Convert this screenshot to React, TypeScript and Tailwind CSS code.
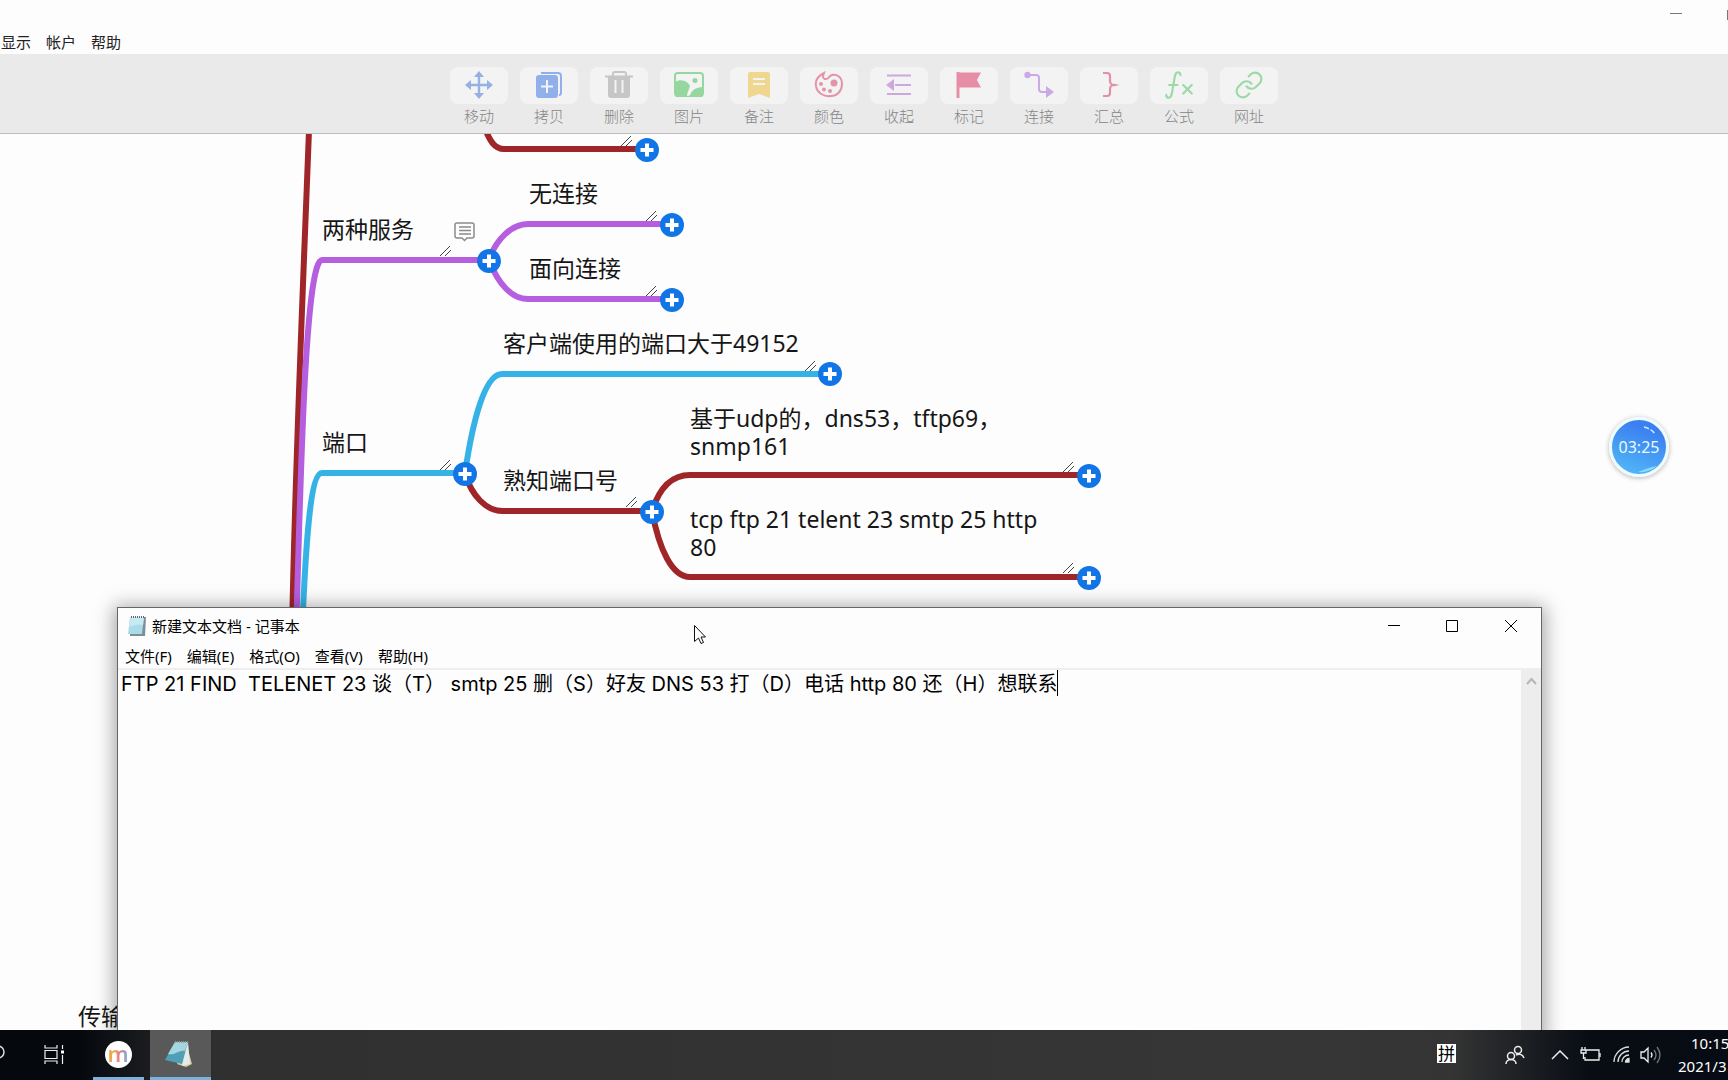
import type { ReactNode } from "react";
import { Link } from "lucide-react";
import { TbMathFunction } from "react-icons/tb";

const Icon = ({ children, color }: { children: ReactNode; color: string }) => (
  <svg width="30" height="30" viewBox="0 0 30 30" fill="none" stroke={color} strokeWidth="2">
    {children}
  </svg>
);

const tools: { label: string; icon: ReactNode }[] = [
  {
    label: "移动",
    icon: (
      <Icon color="#95b0e3">
        <path d="M15 4v22M4 15h22" strokeWidth="2.400" />
        <path d="M15 1l5 6H10zM15 29l5-6H10zM1 15l6-5v10zM29 15l-6-5v10z" fill="#95b0e3" stroke="none" />
      </Icon>
    ),
  },
  {
    label: "拷贝",
    icon: (
      <Icon color="#8fb0ea">
        <path d="M7 3h17a3 3 0 0 1 3 3v17a2 2 0 0 1-2 2" />
        <rect x="2" y="5" width="22" height="23" rx="3" fill="#8fb0ea" stroke="none" />
        <path d="M13 10v13M7 16.500h12" stroke="#f3f3f3" />
      </Icon>
    ),
  },
  {
    label: "删除",
    icon: (
      <Icon color="#c6c6c6">
        <path d="M1 6.500h28M9 6V4a2 2 0 0 1 2-2h9a2 2 0 0 1 2 2v2" />
        <path d="M4 7h22v18a3 3 0 0 1-3 3H7a3 3 0 0 1-3-3z" fill="#c6c6c6" stroke="none" />
        <path d="M11.500 10v13M18.500 10v13" stroke="#f3f3f3" />
      </Icon>
    ),
  },
  {
    label: "图片",
    icon: (
      <Icon color="#95d79f">
        <rect x="1" y="3" width="28" height="23" rx="3" />
        <path d="M1 12c7-4 13 0 15 4-1 3-3 7-3 11H3a2 2 0 0 1-2-2zM16 27c0-6 6-10 13-10v8a2 2 0 0 1-2 2z" fill="#95d79f" stroke="none" />
        <circle cx="21" cy="10.500" r="2.500" fill="#95d79f" stroke="none" />
        <path d="M14 26c1-5 5-9 9-10" stroke="#f3f3f3" />
      </Icon>
    ),
  },
  {
    label: "备注",
    icon: (
      <Icon color="#efd78f">
        <path d="M4 4a2 2 0 0 1 2-2h18a2 2 0 0 1 2 2v24l-11-4-11 4z" fill="#efd78f" stroke="none" />
        <path d="M9 9h12M9 14h12" stroke="#f3f3f3" />
      </Icon>
    ),
  },
  {
    label: "颜色",
    icon: (
      <Icon color="#e394aa">
        <path d="M10 3c-6 3-9 8-8 13 1 7 8 11 15 10 7 0 11-6 11-12 0-7-5-10-10-9-4 1-3 5-7 4-3-1-2-3-1-6z" />
        <circle cx="20" cy="13" r="2.500" fill="#e394aa" />
        <g fill="#e394aa" stroke="none">
          <circle cx="7" cy="14" r="2" />
          <circle cx="10" cy="19.500" r="2" />
          <circle cx="16" cy="21" r="2" />
        </g>
      </Icon>
    ),
  },
  {
    label: "收起",
    icon: (
      <Icon color="#cca8df">
        <path d="M3 5.500h24M11 15h16M3 24h24" />
        <path d="M2 15l8-6v12z" fill="#cca8df" stroke="none" />
      </Icon>
    ),
  },
  {
    label: "标记",
    icon: (
      <Icon color="#e68ea6">
        <path d="M4 2v26" strokeWidth="3" />
        <path d="M4 2.500h23l-4 7.500 4 7.500H4z" fill="#e68ea6" stroke="none" />
      </Icon>
    ),
  },
  {
    label: "连接",
    icon: (
      <Icon color="#cba9e6">
        <path d="M4 5h8a3 3 0 0 1 3 3v11a3 3 0 0 0 3 3h6" />
        <circle cx="3.500" cy="5" r="3.200" fill="#cba9e6" stroke="none" />
        <path d="M22 16l8 6-8 6z" fill="#cba9e6" stroke="none" />
      </Icon>
    ),
  },
  {
    label: "汇总",
    icon: (
      <Icon color="#e38fa6">
        <path d="M9 3h4a3 3 0 0 1 3 3v5a4 4 0 0 0 5 4 4 4 0 0 0-5 4v4a3 3 0 0 1-3 3H9" strokeWidth="2.200" />
      </Icon>
    ),
  },
  { label: "公式", icon: <TbMathFunction size={34} color="#9bd9a5" strokeWidth={1.500} /> },
  { label: "网址", icon: <Link size={30} color="#9bd9a5" strokeWidth={1.700} /> },
];

// Label positions are the left top corner of the text, in canvas coordinates
const labels = [
  { text: "无连接", x: 529, y: 45, w: 160 },
  { text: "两种服务", x: 322, y: 81, w: 130 },
  { text: "面向连接", x: 529, y: 120, w: 160 },
  { text: "客户端使用的端口大于49152", x: 503, y: 195, w: 320 },
  { text: "端口", x: 322, y: 294, w: 130 },
  { text: "基于udp的，dns53，tftp69，snmp161", x: 690, y: 270, w: 370 },
  { text: "熟知端口号", x: 503, y: 332, w: 130 },
  { text: "tcp ftp 21 telent 23 smtp 25 http 80", x: 690, y: 371, w: 370 },
  { text: "传输", x: 78, y: 868, w: 60 },
];

const pluses = [
  [647, 16], [672, 91], [489, 127], [672, 166], [830, 240],
  [465, 340], [652, 378], [1089, 342], [1089, 444],
];

const marks = [
  [621, 2], [646, 77], [440, 112], [646, 152], [805, 227],
  [440, 326], [626, 363], [1063, 328], [1063, 429],
];

const branches = [
  { color: "#9f2529", d: "M309 -4C304 130 295 330 292 500" },
  { color: "#b55fe0", d: "M296 500C300 380 304 126 322 126H489C496 105 512 90 528 90H672M489 126C498 150 512 165 528 165H672" },
  { color: "#9f2529", d: "M484 -8C490 8 495 15 504 15H647" },
  { color: "#35b3e6", d: "M302 500C306 400 311 339 322 339H465C473 285 485 240 502 240H830" },
  { color: "#9f2529", d: "M465 340C472 362 486 377 503 377H652C659 355 671 341 690 341H1089M652 377C659 415 672 443 690 443H1089" },
];

function MindMap() {
  return (
    <>
      <svg className="absolute left-0 top-0 h-full w-full" fill="none" strokeWidth="6">
        {branches.map((b) => (
          <path key={b.d} d={b.d} stroke={b.color} />
        ))}
        {marks.map(([x, y]) => (
          <path key={`${x}-${y}`} d={`M${x} ${y + 10}l10-10M${x + 5} ${y + 10}l6-6`} stroke="#444" strokeWidth="1" />
        ))}
        <g stroke="#8a8a8a" strokeWidth="1.500">
          <path d="M457 89h15a2 2 0 0 1 2 2v11a2 2 0 0 1-2 2h-5l-2.500 2.500-2.500-2.500h-5a2 2 0 0 1-2-2V91a2 2 0 0 1 2-2z" />
          <path d="M459 93h12M459 96.500h12M459 100h12" />
        </g>
      </svg>
      {labels.map((l) => (
        <p key={l.text} className="absolute text-[23px] leading-7 text-[#161616]" style={{ left: l.x, top: l.y, width: l.w }}>
          {l.text}
        </p>
      ))}
      {pluses.map(([x, y]) => (
        <button
          key={`${x}-${y}`}
          aria-label="+"
          className="absolute flex size-6 -translate-x-1/2 -translate-y-1/2 items-center justify-center rounded-full bg-[#1175e6]"
          style={{ left: x, top: y }}
        >
          <svg width="14" height="14" stroke="#fff" strokeWidth="4">
            <path d="M7 .5v13M.5 7h13" />
          </svg>
        </button>
      ))}
    </>
  );
}

function Notepad() {
  return (
    <section className="absolute -bottom-10 left-[117px] right-[186px] top-[473px] flex flex-col border border-[#666] bg-[#fdfdfd] shadow-[0_2px_18px_3px_rgba(0,0,0,0.35)]">
      <header className="flex h-9 items-center pl-[9px]">
        <svg width="20" height="22" viewBox="0 0 20 22">
          <path d="M4 2h15l-1 19H3z" fill="#7d8f90" />
          <path d="M3 2h14l-2 17H1z" fill="#a9dbe8" />
          <path d="M3 2h14l-1 8C10 8 6 12 2 11z" fill="#c6eaf2" />
          <path d="M4 2h13" stroke="#667" strokeWidth="2" strokeDasharray="1 1" />
        </svg>
        <h1 className="ml-[5px] flex-1 text-[15px] text-black">新建文本文档 - 记事本</h1>
        <button aria-label="最小化" className="flex h-full w-[58px] items-center justify-center">
          <svg width="12" height="12" stroke="#000"><path d="M0 5.500h12" /></svg>
        </button>
        <button aria-label="最大化" className="flex h-full w-[58px] items-center justify-center">
          <svg width="12" height="12" fill="none" stroke="#000"><path d="M.5.500h11v11H.5z" /></svg>
        </button>
        <button aria-label="关闭" className="flex h-full w-[60px] items-center justify-center">
          <svg width="12" height="12" stroke="#000"><path d="M0 0l12 12M12 0L0 12" /></svg>
        </button>
      </header>
      <nav className="flex h-[26px] items-center gap-[15px] border-b-2 border-[#eee] pl-[7px] text-[15px] text-black">
        {["文件(F)", "编辑(E)", "格式(O)", "查看(V)", "帮助(H)"].map((m) => (
          <button key={m}>{m}</button>
        ))}
      </nav>
      <div className="relative flex min-h-0 flex-1">
        <textarea
          aria-label="文本"
          className="flex-1 resize-none overflow-hidden bg-transparent px-[3px] font-[Inter,'Noto_Sans_CJK_SC',sans-serif] text-[20px] leading-7 text-black outline-none"
          defaultValue="FTP 21 FIND  TELENET 23 谈（T） smtp 25 删（S）好友 DNS 53 打（D）电话 http 80 还（H）想联系"
        />
        <span className="absolute left-[939px] top-0 h-[26px] w-px bg-black" />
        <div className="flex w-5 justify-center bg-[#ededed] pt-[7px]">
          <svg width="11" height="9" fill="none" stroke="#b5b5b5" strokeWidth="2"><path d="M1 7l4.500-5L10 7" /></svg>
        </div>
      </div>
    </section>
  );
}

function Taskbar() {
  return (
    <footer className="relative z-10 flex h-[50px] shrink-0 items-center overflow-hidden bg-[linear-gradient(90deg,#05090e_0,#05090e_80px,#303030_220px,#363636_75%,#343434_84%,#080d14_92%,#070c14_100%)] text-white">
      <svg width="44" height="50" fill="none" stroke="#ddd" strokeWidth="1.500"><circle cx="-2" cy="22" r="6" /></svg>
      <button aria-label="任务视图" className="flex w-[49px] justify-start">
        <svg width="20" height="20" fill="none" stroke="#eee" strokeWidth="1.200">
          <path d="M1 0v3h12V0M1 19v-3h12v3M1 5.500h12v8H1zM18.500 0v4M18.500 10v9" />
          <path d="M17 5.500h3v3h-3z" fill="#fff" stroke="none" />
        </svg>
      </button>
      <button className="flex h-full w-[51px] items-center justify-center border-b-[3px] border-[#7db2dc] pr-px pt-[2px]">
        <span className="flex size-[27px] items-center justify-center rounded-full bg-white">
          <span className="bg-[linear-gradient(90deg,#f39a4a,#e9b04b_35%,#e5719c_60%,#68c3dc)] bg-clip-text pb-1 text-[22px] font-semibold leading-6 text-transparent">m</span>
        </span>
      </button>
      <button aria-label="记事本" className="ml-[6px] flex h-full w-[61px] items-center justify-center border-b-[3px] border-[#7db2dc] bg-[#595959] pr-[5px]">
        <svg width="28" height="28" viewBox="0 0 28 28">
          <path d="M22 3l6 21-6 3-9-3z" fill="#d8cf9e" />
          <path d="M11 2h13l-6 22L1 20z" fill="#4f9fb8" />
          <path d="M11 2h13l-3 9C16 9 10 16 4 14z" fill="#a4d6e2" />
          <path d="M18 26l6-24 2 22z" fill="#e3ebeb" />
          <path d="M11 2h13" stroke="#999" strokeWidth="2" strokeDasharray="1 1" />
        </svg>
      </button>
      <div className="flex-1" />
      <button className="mb-[3px] flex size-[19px] items-center justify-center bg-white text-[17px] leading-none text-black">拼</button>
      <button aria-label="人脉" className="ml-[49px]">
        <svg width="20" height="20" fill="none" stroke="#eee" strokeWidth="1.500">
          <circle cx="13" cy="5" r="3.500" />
          <circle cx="6" cy="11" r="3.500" />
          <path d="M1 19c0-6 10-6 10 0M11 10c4-2 7 0 8 3" />
        </svg>
      </button>
      <button aria-label="显示隐藏的图标" className="ml-[26px]">
        <svg width="18" height="10" fill="none" stroke="#eee" strokeWidth="1.500"><path d="M1 9l8-8 8 8" /></svg>
      </button>
      <button aria-label="电池" className="ml-[11px]">
        <svg width="21" height="16" fill="none" stroke="#eee" strokeWidth="1.300">
          <path d="M6 3h13v10H5v-3M2 0v3M5 0v3M1 3h5v3H1zM3.500 6v6" />
          <path d="M20 6v4" />
        </svg>
      </button>
      <button aria-label="网络" className="ml-[12px]">
        <svg width="18" height="18" fill="none" stroke="#ddd" strokeWidth="1.300">
          <path d="M1 16C1 8 8 1 16 1M5 16C5 10 10 5 16 5M9 16c0-4 3-7 7-7" />
          <path d="M12.500 16c0-2 2-3.500 3.500-3.500V16z" fill="#eee" />
        </svg>
      </button>
      <button aria-label="音量" className="ml-[9px]">
        <svg width="22" height="18" fill="none" stroke="#eee" strokeWidth="1.300">
          <path d="M1 6h3l4-4v14l-4-4H1zM11 6.500q2 2.500 0 5" />
          <path d="M14 4q4 5 0 10M17 1q6 8 0 16" stroke="#777" />
        </svg>
      </button>
      <p className="ml-4 w-[50px] whitespace-nowrap text-[15px] leading-[23px]">
        <time className="block pl-[13px]">10:15</time>
        <time className="block">2021/3</time>
      </p>
    </footer>
  );
}

export default function App() {
  return (
    <div className="flex h-screen flex-col overflow-hidden bg-[#fdfdfd] font-['Noto_Sans','Noto_Sans_CJK_SC',sans-serif]">
      <header className="relative flex h-[54px] shrink-0 items-end justify-between">
        <nav className="flex gap-[15px] pb-px pl-px text-[15px] leading-[22px] text-[#222]">
          {["显示", "帐户", "帮助"].map((m) => (
            <button key={m}>{m}</button>
          ))}
        </nav>
        <div className="flex h-full items-start pt-[9px]">
          <button aria-label="最小化">
            <svg width="58" height="12" stroke="#777"><path d="M0 4.500h12M57.500 1v10" /></svg>
          </button>
        </div>
      </header>

      <div className="flex h-20 shrink-0 justify-center gap-3 border-b border-[#bdbdbd] bg-[#eaeaea] pt-[13px]">
        {tools.map((t) => (
          <button key={t.label} className="flex w-[58px] flex-col items-center text-[15px] font-light leading-[22px] text-[#858585]">
            <span className="mb-px flex h-[37px] w-full items-center justify-center rounded-lg bg-[#f3f3f3] pb-px">{t.icon}</span>
            {t.label}
          </button>
        ))}
      </div>

      <main className="relative min-h-0 flex-1 overflow-hidden">
        <MindMap />
        <div className="absolute right-[59px] top-[283px] flex size-[60px] items-center justify-center rounded-full border-[3px] border-[#effcff] bg-[linear-gradient(20deg,#53bdf8,#3b7ff0_80%)] text-base text-[#e8fbff] shadow-[0_1px_5px_rgba(0,0,0,0.3)]">
          03:25
          <svg className="absolute inset-0" width="54" height="54" fill="none" stroke="#c8ecff" strokeWidth="1.500">
            <path d="M32 7q8 2 11 7" strokeDasharray="5 2" />
            <path d="M26 52q12-5 19-6-8 7-19 6z" fill="#8ed8fb" stroke="none" />
          </svg>
        </div>
        <Notepad />
        <svg className="absolute left-[694px] top-[491px]" width="13" height="20" fill="#fff" stroke="#111">
          <path d="M.5.500v16l4-3.500 2.500 5.500 2.500-1-2.500-5.500h4.500z" />
        </svg>
      </main>

      <Taskbar />
    </div>
  );
}
